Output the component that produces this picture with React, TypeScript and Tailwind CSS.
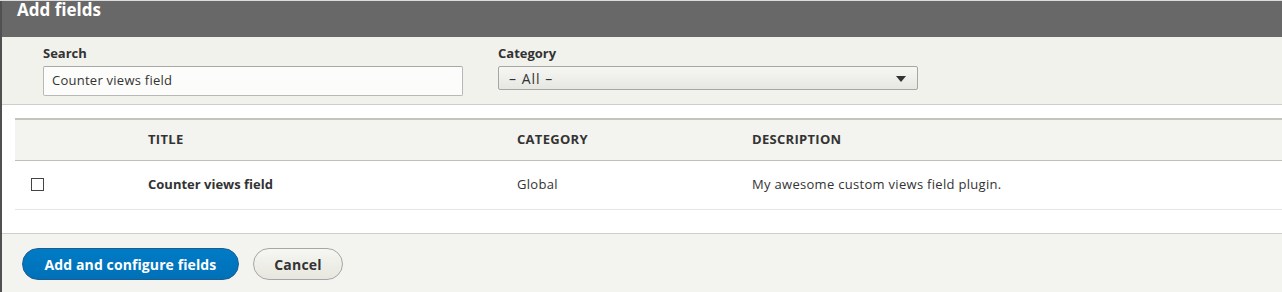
import React from "react"

const FONT = "font-['Open_Sans',_'DejaVu_Sans',_sans-serif]"

function Header() {
  return (
    <div className="h-[36px] shrink-0 bg-[#686868] pl-[15px]">
      <h1 className="text-[17px] leading-[18px] font-bold text-white">Add fields</h1>
    </div>
  )
}

function Filters() {
  return (
    <div className="h-[68px] shrink-0 bg-[#f2f2ed] border-b border-[#cfcfca] pl-[41px] pt-[7px] flex gap-[35px]">
      <div className="w-[420px]">
        <label className="block text-[13px] leading-[18px] font-bold text-[#333] mb-[4px]">Search</label>
        <div className="h-[30px] border border-[#b8b8b8] border-t-[#a8a8a8] rounded-[2px] bg-[#fcfcfa] pl-[8px] flex items-center text-[13px] tracking-[0.25px] text-[#333]">
          Counter views field
        </div>
      </div>
      <div className="w-[420px]">
        <label className="block text-[13px] leading-[18px] font-bold text-[#333] mb-[4px]">Category</label>
        <div className="h-[24px] border border-[#a6a6a6] rounded-[2px] bg-gradient-to-b from-[#f6f6f3] to-[#e7e7e2] pl-[10px] pr-[11px] flex items-center justify-between text-[14px] tracking-[1px] text-[#333]">
          <span>– All –</span>
          <svg width="10" height="6" viewBox="0 0 10 6" className="mt-[2px]">
            <path d="M0 0h10L5 6z" fill="#333" />
          </svg>
        </div>
      </div>
    </div>
  )
}

function FieldTable() {
  return (
    <div className="pt-[13px] pl-[13px] bg-white">
      <div className="border-t-2 border-[#c4c4bf]">
        <div className="h-[41px] bg-[#f3f3ef] border-b border-[#bfbfba] flex items-center text-[13px] tracking-[0.3px] font-bold text-[#333] uppercase">
          <div className="w-[133px]" />
          <div className="w-[369px]">Title</div>
          <div className="w-[235px]">Category</div>
          <div className="flex-1">Description</div>
        </div>
        <div className="h-[49px] border-b border-[#e6e6e2] flex items-center text-[13px] text-[#333]">
          <div className="w-[133px] pl-[16px]">
            <div className="w-[13px] h-[13px] border border-[#444] bg-white -mt-[2px]" />
          </div>
          <div className="w-[369px] font-bold">Counter views field</div>
          <div className="w-[235px] tracking-[0.3px]">Global</div>
          <div className="flex-1 tracking-[0.3px]">My awesome custom views field plugin.</div>
        </div>
      </div>
      <div className="h-[23px]" />
    </div>
  )
}

function Footer() {
  return (
    <div className="flex-1 bg-[#f3f3ef] border-t border-[#cfcfca] pt-[14px] pl-[20px] flex items-start gap-[14px]">
      <button className="h-[32px] w-[217px] rounded-full border border-[#1e5c90] bg-gradient-to-b from-[#007bc6] to-[#0071b8] text-white text-[14px] tracking-[0.1px] font-bold">
        Add and configure fields
      </button>
      <button className="h-[32px] w-[90px] rounded-full border border-[#a6a6a6] bg-gradient-to-b from-[#f6f6f3] to-[#e7e7df] text-[#333] text-[14px] tracking-[0.2px] font-bold">
        Cancel
      </button>
    </div>
  )
}

export default function App() {
  return (
    <div className={`${FONT} h-[292px] w-full overflow-hidden bg-[#dcdcdc] pt-[1px]`}>
      <div className="h-full flex flex-col border-l-2 border-[#505050]">
        <Header />
        <Filters />
        <FieldTable />
        <Footer />
      </div>
    </div>
  )
}
